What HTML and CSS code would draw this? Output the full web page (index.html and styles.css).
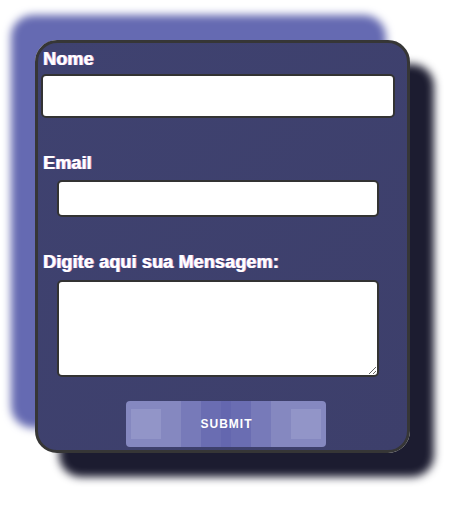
FILE: index.html
```html
<!DOCTYPE html>
<html lang="pt">
<head>
<meta charset="utf-8">
<title>Contato</title>
<link rel="stylesheet" href="styles.css">
</head>
<body>
<form class="card">
  <label class="label label-nome" for="nome">Nome</label>
  <input class="field field-nome" id="nome" type="text">
  <label class="label label-email" for="email">Email</label>
  <input class="field field-email" id="email" type="email">
  <label class="label label-msg" for="msg">Digite aqui sua Mensagem:</label>
  <textarea class="field field-msg" id="msg"></textarea>
  <button class="submit" type="button">
    <span class="sq sq-left"></span>
    <span class="submit-text">SUBMIT</span>
    <span class="sq sq-right"></span>
  </button>
</form>
</body>
</html>
```

FILE: styles.css
```css
html, body {
  margin: 0;
  padding: 0;
  background: #ffffff;
}

body {
  font-family: "Liberation Sans", Arial, sans-serif;
  box-sizing: border-box;
  min-height: 507px;
  padding: 40px 0 54px 35px;
}

.card {
  box-sizing: border-box;
  width: 375px;
  height: 413px;
  border: 3px solid #363636;
  border-radius: 22px;
  background: linear-gradient(135deg, #3f4270 0%, #3d3f6b 100%);
  box-shadow: -24px -25px 8px #656ab2, 24px 24px 8px #1c1c30;
  display: flex;
  flex-direction: column;
  align-items: flex-start;
  padding: 6px 0 0 0;
}

.label {
  display: block;
  color: #ffffff;
  font-weight: bold;
  font-size: 18px;
  line-height: 21px;
  margin-left: 5px;
  letter-spacing: 0.15px;
  text-shadow: 1px 0 0 rgba(255, 200, 230, 0.85), -0.5px 0 0 rgba(190, 190, 255, 0.8);
}

.field {
  box-sizing: border-box;
  display: block;
  background: #ffffff;
  border: 2px solid #333333;
  border-radius: 5px;
  margin: 0;
  padding: 0;
  font-family: inherit;
}

.field-nome {
  width: 354px;
  height: 44px;
  margin: 4px 0 0 3px;
}

.label-email {
  margin-top: 35px;
}

.field-email {
  width: 322px;
  height: 37px;
  margin: 6px 0 0 19px;
}

.label-msg {
  margin-top: 35px;
}

.field-msg {
  width: 322px;
  height: 97px;
  margin: 7px 0 0 19px;
  resize: both;
}

.submit {
  position: relative;
  box-sizing: border-box;
  width: 200px;
  height: 46px;
  margin: 24px 0 0 88px;
  border: none;
  border-radius: 4px;
  padding: 0;
  background: linear-gradient(90deg,
    #8588c0 0px, #8588c0 55px,
    #777ab9 55px, #777ab9 75px,
    #6a6db2 75px, #6a6db2 95px,
    #6467af 95px, #6467af 105px,
    #6a6db2 105px, #6a6db2 125px,
    #777ab9 125px, #777ab9 145px,
    #8588c0 145px, #8588c0 200px);
  color: #ffffff;
  font-family: inherit;
  font-weight: bold;
  font-size: 12px;
  letter-spacing: 1px;
  display: flex;
  align-items: center;
  justify-content: center;
}

.submit-text {
  padding-left: 1px;
}

.sq {
  position: absolute;
  top: 8px;
  width: 30px;
  height: 30px;
  background: #9295c8;
}

.sq-left {
  left: 5px;
}

.sq-right {
  right: 5px;
}
```
